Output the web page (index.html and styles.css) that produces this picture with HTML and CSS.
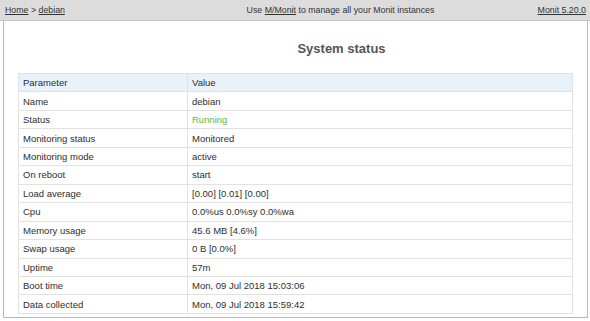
FILE: index.html
```html
<!DOCTYPE html>
<html lang="en">
<head>
  <meta charset="UTF-8" />
  <title>Monit: system status</title>
  <link rel="stylesheet" href="styles.css">
</head>
<body>

  <!-- Top bar -->
  <div class="header">
    <div class="crumbs"><a href="#">Home</a> &gt; <a href="#">debian</a></div>
    <div class="mmonit">Use <a href="#">M/Monit</a> to manage all your Monit instances</div>
    <div class="version"><a href="#">Monit 5.20.0</a></div>
  </div>

  <!-- Content -->
  <div class="content">
    <h1>System status</h1>
    <table class="status">
      <tr class="head"><th>Parameter</th><th>Value</th></tr>
      <tr><td>Name</td><td>debian</td></tr>
      <tr><td>Status</td><td class="ok">Running</td></tr>
      <tr><td>Monitoring status</td><td>Monitored</td></tr>
      <tr><td>Monitoring mode</td><td>active</td></tr>
      <tr><td>On reboot</td><td>start</td></tr>
      <tr><td>Load average</td><td>[0.00] [0.01] [0.00]</td></tr>
      <tr><td>Cpu</td><td>0.0%us 0.0%sy 0.0%wa</td></tr>
      <tr><td>Memory usage</td><td>45.6 MB [4.6%]</td></tr>
      <tr><td>Swap usage</td><td>0 B [0.0%]</td></tr>
      <tr><td>Uptime</td><td>57m</td></tr>
      <tr><td>Boot time</td><td>Mon, 09 Jul 2018 15:03:06</td></tr>
      <tr><td>Data collected</td><td>Mon, 09 Jul 2018 15:59:42</td></tr>
    </table>
  </div>

</body>
</html>
```

FILE: styles.css
```css
body {
  margin: 0;
  padding: 0;
  background-color: white;
  color: #333;
  font-family: "Liberation Sans", Arial, sans-serif;
  font-size: 10px;
}

a {
  color: #333;
}

.header {
  display: flex;
  align-items: center;
  height: 20px;
  padding: 0 4px 0 5px;
  background-color: #dcdcdc;
  border-bottom: 1px solid #c4c4c4;
  font-size: 8.8px;
  color: #333;
  white-space: nowrap;
}

.crumbs {
  width: 240px;
}

.mmonit {
  flex: 1;
  text-align: center;
}

.version {
  width: 150px;
  text-align: right;
}

.content {
  margin: 0 2px 2px 3px;
  height: 297px;
  border: 1px solid #b8b8b8;
  border-top: none;
  box-sizing: border-box;
}

h1 {
  margin: 0;
  padding: 20px 0 0 92px;
  height: 52px;
  box-sizing: border-box;
  font-size: 13px;
  font-weight: bold;
  color: #555;
  text-align: center;
}

.status {
  margin-left: 14px;
  width: 555px;
  border-collapse: collapse;
  border: 1px solid #dedede;
}

.status th,
.status td {
  height: 17.46px;
  padding: 0 4px;
  border: 1px solid #e2e2e2;
  text-align: left;
  font-weight: normal;
  font-size: 9.5px;
  line-height: 11px;
  color: #2e2e2e;
  white-space: nowrap;
}

.status th:first-child,
.status td:first-child {
  width: 160px;
}

.status tr.head th {
  background-color: #eaf2f9;
}

.status td.ok {
  color: #6ab43a;
}
```
